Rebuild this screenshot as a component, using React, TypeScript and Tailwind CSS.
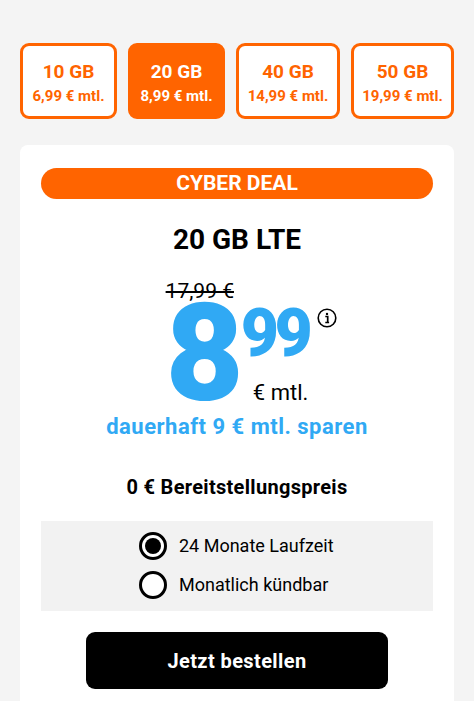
import React from 'react'

// ── Tarif tiles ───────────────────────────────────────────────────────────────
const TARIFS = [
  { gb: '10 GB', price: '6,99 € mtl.', w: 'w-[97px]', active: false },
  { gb: '20 GB', price: '8,99 € mtl.', w: 'w-[97px]', active: true },
  { gb: '40 GB', price: '14,99 € mtl.', w: 'w-[104px]', active: false },
  { gb: '50 GB', price: '19,99 € mtl.', w: 'w-[103px]', active: false },
]

function InfoIcon() {
  return (
    <svg width="20" height="20" viewBox="0 0 20 20" fill="none">
      <circle cx="10" cy="10" r="8.8" stroke="#000" strokeWidth="1.6" />
      <circle cx="10" cy="5.9" r="1.2" fill="#000" />
      <path d="M8.3 8.5h2.4v5.9M8.3 14.5h3.8" stroke="#000" strokeWidth="1.7" />
    </svg>
  )
}

function Radio({ checked }: { checked: boolean }) {
  return (
    <span className="flex h-[28px] w-[28px] shrink-0 items-center justify-center rounded-full border-[3px] border-black bg-white">
      {checked && <span className="h-[16px] w-[16px] rounded-full bg-black" />}
    </span>
  )
}

export default function App() {
  return (
    <div
      className="min-h-[701px] bg-[#f4f4f4] px-[20px] pt-[43px]"
      style={{ fontFamily: 'Roboto, "Liberation Sans", sans-serif' }}
    >
      {/* Tiles */}
      <div className="flex gap-[11px]">
        {TARIFS.map((t) => (
          <div
            key={t.gb}
            className={[
              'flex h-[76px] flex-col items-center justify-center rounded-[9px] border-[3px] border-[#ff6400] pt-[4px]',
              t.w,
              t.active ? 'bg-[#ff6400] text-white' : 'bg-white text-[#ff6400]',
            ].join(' ')}
          >
            <div className="text-[19px] font-bold leading-[22px]">{t.gb}</div>
            <div className="mt-[4px] text-[15px] font-bold leading-[18px]">{t.price}</div>
          </div>
        ))}
      </div>

      {/* Offer card */}
      <div className="mt-[26px] flex flex-col items-center rounded-t-[8px] bg-white px-[21px] pb-[12px] pt-[23px]">
        <div className="flex h-[31px] w-full items-center justify-center rounded-full bg-[#ff6400] text-[21px] font-bold text-white">
          CYBER DEAL
        </div>

        <div className="mt-[26px] text-[28px] font-bold leading-[30px] text-black">20 GB LTE</div>

        {/* Price */}
        <div className="mt-[25px] flex flex-col">
          <div className="text-[21px] leading-[22px] text-black line-through">17,99 €</div>
          <div className="mt-[2px] flex">
            <div className="text-[135px] font-black leading-[100px] text-[#30a9f4]">8</div>
            <div className="ml-[-3px] flex flex-col pt-[3px]">
              <div className="relative self-start">
                <div className="text-[66px] font-black leading-[54px] tracking-[-4.5px] text-[#30a9f4]">99</div>
                <div className="absolute left-[calc(100%+9px)] top-[1px]">
                  <InfoIcon />
                </div>
              </div>
              <div className="ml-[12px] mt-[19px] text-[22px] leading-[26px] text-black">€ mtl.</div>
            </div>
          </div>
        </div>

        <div className="mt-[8px] text-[22px] font-bold leading-[26px] tracking-[0.5px] text-[#30a9f4]">
          dauerhaft 9 € mtl. sparen
        </div>

        <div className="mt-[35px] text-[20px] font-bold leading-[24px] tracking-[0.3px] text-black">
          0 € Bereitstellungspreis
        </div>

        {/* Laufzeit */}
        <div className="mt-[22px] flex w-full flex-col items-center gap-[11px] bg-[#f2f2f2] pb-[12px] pt-[11px]">
          <div className="flex w-[196px] items-center gap-[12px]">
            <Radio checked />
            <span className="text-[18px] leading-[28px] text-black">24 Monate Laufzeit</span>
          </div>
          <div className="flex w-[196px] items-center gap-[12px]">
            <Radio checked={false} />
            <span className="text-[18px] leading-[28px] text-black">Monatlich kündbar</span>
          </div>
        </div>

        <button className="mt-[21px] flex h-[57px] w-[302px] items-center justify-center rounded-[9px] bg-black text-[20px] font-bold tracking-[0.4px] text-white">
          Jetzt bestellen
        </button>
      </div>
    </div>
  )
}
